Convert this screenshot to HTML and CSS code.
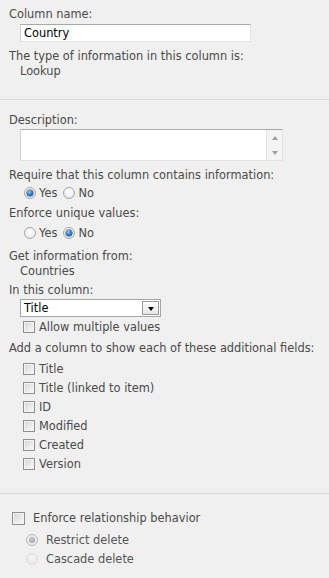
FILE: index.html
```html
<!DOCTYPE html>
<html>
<head>
<meta charset="utf-8">
<link rel="stylesheet" href="styles.css">
</head>
<body>
<div class="sec sec1">
  <div class="lbl">Column name:</div>
  <div class="sub"><div class="input">Country</div></div>
  <div class="lbl mt7">The type of information in this column is:</div>
  <div class="sub val">Lookup</div>
</div>
<div class="rule"></div>
<div class="sec sec2">
  <div class="lbl">Description:</div>
  <div class="sub"><div class="textarea"><div class="sbar"><span class="up"></span><span class="down"></span></div></div></div>
  <div class="lbl mt7">Require that this column contains information:</div>
  <div class="sub opts mt3">
    <span class="opt"><span class="radio on"></span>Yes</span>
    <span class="opt"><span class="radio"></span>No</span>
  </div>
  <div class="lbl mt5">Enforce unique values:</div>
  <div class="sub opts mt5">
    <span class="opt"><span class="radio"></span>Yes</span>
    <span class="opt"><span class="radio on"></span>No</span>
  </div>
  <div class="lbl mt8">Get information from:</div>
  <div class="sub val">Countries</div>
  <div class="lbl mt5">In this column:</div>
  <div class="sub mt2">
    <div class="select"><span class="selval">Title</span><span class="drop"><span class="tri"></span></span></div>
  </div>
  <div class="sub opts cbrow mt2"><span class="cb"></span>Allow multiple values</div>
  <div class="lbl mt6">Add a column to show each of these additional fields:</div>
  <div class="sub list">
    <div class="opts cbrow"><span class="cb"></span>Title</div>
    <div class="opts cbrow"><span class="cb"></span>Title (linked to item)</div>
    <div class="opts cbrow"><span class="cb"></span>ID</div>
    <div class="opts cbrow"><span class="cb"></span>Modified</div>
    <div class="opts cbrow"><span class="cb"></span>Created</div>
    <div class="opts cbrow"><span class="cb"></span>Version</div>
  </div>
</div>
<div class="rule"></div>
<div class="sec sec3">
  <div class="opts enforce"><span class="cb big"></span>Enforce relationship behavior</div>
  <div class="sub opts dis mt6"><span class="radio dison"></span>Restrict delete</div>
  <div class="sub opts dis mt3"><span class="radio disoff"></span>Cascade delete</div>
</div>
</body>
</html>
```

FILE: styles.css
```css
html, body {
  margin: 0;
  padding: 0;
  background: #f0f0f0;
}
body {
  font-family: "DejaVu Sans", Verdana, sans-serif;
  font-size: 11.4px;
  color: #4a4a4a;
  width: 329px;
  height: 578px;
  overflow: hidden;
}
.sec { padding-left: 9px; }
.sec1 { padding-top: 7px; padding-bottom: 21px; }
.sec2 { padding-top: 13px; padding-bottom: 21px; }
.sec3 { padding-top: 16px; padding-left: 12px; }
.rule { height: 1px; background: #d9d9d9; }
.lbl { line-height: 14px; height: 14px; white-space: nowrap; }
.sub { padding-left: 11px; }
.val { line-height: 14px; margin-top: 1px; }
.mt1 { margin-top: 1px; }
.mt2 { margin-top: 2px; }
.mt3 { margin-top: 3px; }
.mt4 { margin-top: 4px; }
.mt5 { margin-top: 5px; }
.mt6 { margin-top: 6px; }
.mt7 { margin-top: 7px; }
.mt8 { margin-top: 8px; }

.input {
  margin-top: 3px;
  box-sizing: border-box;
  width: 231px;
  height: 18px;
  background: #fff;
  border: 1px solid;
  border-color: #a9a9a9 #e2e2e2 #e2e2e2 #d0d0d0;
  color: #000;
  line-height: 16px;
  padding-left: 3px;
  font-size: 11.4px;
}
.textarea {
  margin-top: 2px;
  box-sizing: border-box;
  width: 263px;
  height: 32px;
  background: #fff;
  border: 1px solid;
  border-color: #a9a9a9 #e2e2e2 #e2e2e2 #d0d0d0;
  display: flex;
  justify-content: flex-end;
}
.sbar {
  width: 16px;
  height: 100%;
  background: #f4f4f4;
  border-left: 1px solid #e4e4e4;
  display: flex;
  flex-direction: column;
  align-items: center;
  justify-content: space-between;
  padding: 6px 0 5px;
  box-sizing: border-box;
}
.up, .down { width: 0; height: 0; border-left: 3.5px solid transparent; border-right: 3.5px solid transparent; }
.up { border-bottom: 4px solid #a0a0a0; }
.down { border-top: 4px solid #a0a0a0; }

.opts {
  display: flex;
  align-items: center;
  height: 16px;
  line-height: 16px;
  white-space: nowrap;
}
.opt { display: flex; align-items: center; margin-right: 2px; }
.radio {
  box-sizing: border-box;
  width: 12px;
  height: 12px;
  border-radius: 50%;
  border: 1px solid #a7a7a7;
  background: radial-gradient(circle at 50% 40%, #ffffff 0%, #f2f2f2 50%, #d8d8d8 100%);
  margin: 0 3px 0 4px;
  position: relative;
}
.radio.on::after {
  content: "";
  position: absolute;
  left: 2px; top: 2px;
  width: 6px; height: 6px;
  border-radius: 50%;
  background: radial-gradient(circle at 40% 35%, #9fd4ff 0%, #2a7fd0 45%, #0d3f7a 100%);
  box-shadow: 0 0 0 0.5px #0b3463;
}
.radio.dison {
  border-color: #b9b9b9;
  background: radial-gradient(circle, #f4f4f4 0%, #e6e6e6 100%);
}
.radio.dison::after {
  content: "";
  position: absolute;
  left: 2px; top: 2px;
  width: 6px; height: 6px;
  border-radius: 50%;
  background: radial-gradient(circle at 45% 40%, #c8c8c8 0%, #9a9a9a 100%);
}
.radio.disoff {
  border-color: #dcdcdc;
  background: radial-gradient(circle at 50% 40%, #f6f6f6 0%, #e4e4e4 100%);
}
.dis { color: #555; }
.dis .radio { margin-left: 3px; margin-right: 8px; }

.cb {
  box-sizing: border-box;
  width: 12px;
  height: 12px;
  border: 1px solid #8f8f8f;
  background: linear-gradient(135deg, #d4d4d4 0%, #ececec 60%, #f8f8f8 100%);
  box-shadow: inset 0 0 0 1px #f4f4f4;
  margin: 0 4px 0 3px;
}
.cb.big { width: 13px; height: 13px; margin: 0 8px 0 0; }

.select {
  box-sizing: border-box;
  width: 141px;
  height: 18px;
  background: #fff;
  border: 1px solid #a5a5a5;
  display: flex;
  align-items: center;
  justify-content: space-between;
  color: #000;
  font-size: 11.4px;
}
.selval { padding-left: 3px; line-height: 16px; }
.drop {
  box-sizing: border-box;
  width: 17px;
  height: 14px;
  margin-right: 1px;
  border: 1px solid #9a9a9a;
  background: linear-gradient(#ffffff, #e6e6e6);
  display: flex;
  align-items: center;
  justify-content: center;
}
.tri {
  width: 0; height: 0;
  margin-top: 2px;
  border-left: 3.5px solid transparent;
  border-right: 3.5px solid transparent;
  border-top: 4px solid #000;
}
.list { margin-top: 6px; display: flex; flex-direction: column; gap: 3px; }
.enforce { height: 16px; }
```
